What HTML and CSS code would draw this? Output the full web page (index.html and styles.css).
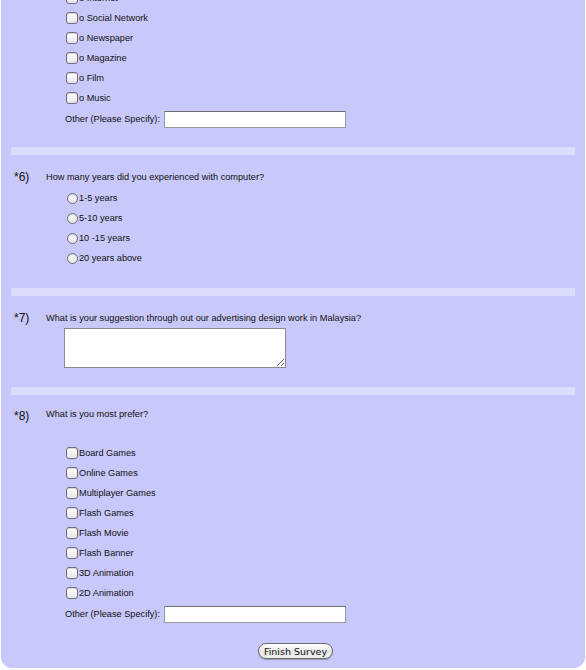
FILE: index.html
```html
<!DOCTYPE html>
<html>
<head>
<meta charset="utf-8">
<link rel="stylesheet" href="styles.css">
</head>
<body>
<div class="panel">
  <div class="options first">
    <label class="opt"><input type="checkbox" class="cb"><span>o Internet</span></label>
    <label class="opt"><input type="checkbox" class="cb"><span>o Social Network</span></label>
    <label class="opt"><input type="checkbox" class="cb"><span>o Newspaper</span></label>
    <label class="opt"><input type="checkbox" class="cb"><span>o Magazine</span></label>
    <label class="opt"><input type="checkbox" class="cb"><span>o Film</span></label>
    <label class="opt"><input type="checkbox" class="cb"><span>o Music</span></label>
    <div class="other"><span>Other (Please Specify):</span><input type="text" class="txt"></div>
  </div>
  <div class="sep sep1"></div>
  <div class="q q6"><span class="num">*6)</span><span class="qtext">How many years did you experienced with computer?</span></div>
  <div class="options radios">
    <label class="opt"><input type="radio" name="yrs" class="rd"><span>1-5 years</span></label>
    <label class="opt"><input type="radio" name="yrs" class="rd"><span>5-10 years</span></label>
    <label class="opt"><input type="radio" name="yrs" class="rd"><span>10 -15 years</span></label>
    <label class="opt"><input type="radio" name="yrs" class="rd"><span>20 years above</span></label>
  </div>
  <div class="sep sep2"></div>
  <div class="q q7"><span class="num">*7)</span><span class="qtext">What is your suggestion through out our advertising design work in Malaysia?</span></div>
  <div class="areawrap"><textarea class="area"></textarea></div>
  <div class="sep sep3"></div>
  <div class="q q8"><span class="num num8">*8)</span><span class="qtext">What is you most prefer?</span></div>
  <div class="options prefs">
    <label class="opt"><input type="checkbox" class="cb"><span>Board Games</span></label>
    <label class="opt"><input type="checkbox" class="cb"><span>Online Games</span></label>
    <label class="opt"><input type="checkbox" class="cb"><span>Multiplayer Games</span></label>
    <label class="opt"><input type="checkbox" class="cb"><span>Flash Games</span></label>
    <label class="opt"><input type="checkbox" class="cb"><span>Flash Movie</span></label>
    <label class="opt"><input type="checkbox" class="cb"><span>Flash Banner</span></label>
    <label class="opt"><input type="checkbox" class="cb"><span>3D Animation</span></label>
    <label class="opt"><input type="checkbox" class="cb"><span>2D Animation</span></label>
    <div class="other"><span>Other (Please Specify):</span><input type="text" class="txt"></div>
  </div>
  <div class="actions"><button class="btn" type="button">Finish Survey</button></div>
</div>
</body>
</html>
```
FILE: styles.css
```css
html, body {
  margin: 0;
  padding: 0;
  background: #ffffff;
}
body {
  font-family: "Liberation Sans", Arial, sans-serif;
  font-size: 9.2px;
  color: #111111;
  overflow: hidden;
}
.panel {
  margin: -12px 1px 0 1px;
  background: #c8c8fa;
  border-radius: 0 0 11px 11px;
  padding-bottom: 9px;
}
.options {
  display: flex;
  flex-direction: column;
  padding-left: 64px;
}
.opt {
  height: 20px;
  display: flex;
  align-items: center;
}
.cb, .rd {
  -webkit-appearance: none;
  appearance: none;
  margin: 0 1px 0 1px;
  width: 12px;
  height: 12px;
  box-sizing: border-box;
  border: 1px solid #6f6f7a;
  background: linear-gradient(#ffffff, #e6e6ea);
  box-shadow: inset 0 1px 1px rgba(0,0,0,0.15);
}
.cb {
  border-radius: 3px;
}
.rd {
  border-radius: 50%;
  width: 11px;
  height: 11px;
  margin-left: 2px;
  margin-right: 1px;
}
.other {
  height: 22px;
  display: flex;
  align-items: center;
}
.txt {
  margin: 0 0 0 4px;
  width: 182px;
  height: 17px;
  box-sizing: border-box;
  border: 1px solid #9a9a9a;
  border-top-color: #6e6e6e;
  background: #ffffff;
  padding: 0 2px;
}
.sep {
  height: 8px;
  margin: 0 10px;
  background: #dcdcfd;
}
.sep1 { margin-top: 17px; }
.sep2 { margin-top: 20px; }
.sep3 { margin-top: 19px; }
.q {
  display: flex;
  align-items: center;
  height: 20px;
  padding-left: 13px;
}
.num {
  width: 32px;
  font-size: 12px;
  color: #111111;
}
.q6 { margin-top: 12px; }
.radios { margin-top: 1px; }
.q7 { margin-top: 13px; height: 18px; }
.areawrap {
  padding-left: 63px;
  margin-top: 1px;
  display: flex;
}
.area {
  margin: 0;
  width: 222px;
  height: 40px;
  box-sizing: border-box;
  border: 1px solid #8a8a8a;
  background: #ffffff;
  resize: both;
}
.q8 { margin-top: 9px; }
.num8 { position: relative; top: 2px; }
.prefs { margin-top: 19px; }
.actions {
  display: flex;
  justify-content: center;
  margin-top: 18px;
}
.btn {
  height: 16px;
  width: 75px;
  padding: 0;
  margin-left: 5px;
  border: 1px solid #6a6a6a;
  border-radius: 8px;
  background: linear-gradient(#ffffff, #e4e4e4 60%, #f2f2f2);
  font-family: "DejaVu Sans", "Liberation Sans", sans-serif;
  font-size: 9.5px;
  color: #111111;
  box-shadow: 0 1px 1px rgba(0,0,0,0.25);
}
```
